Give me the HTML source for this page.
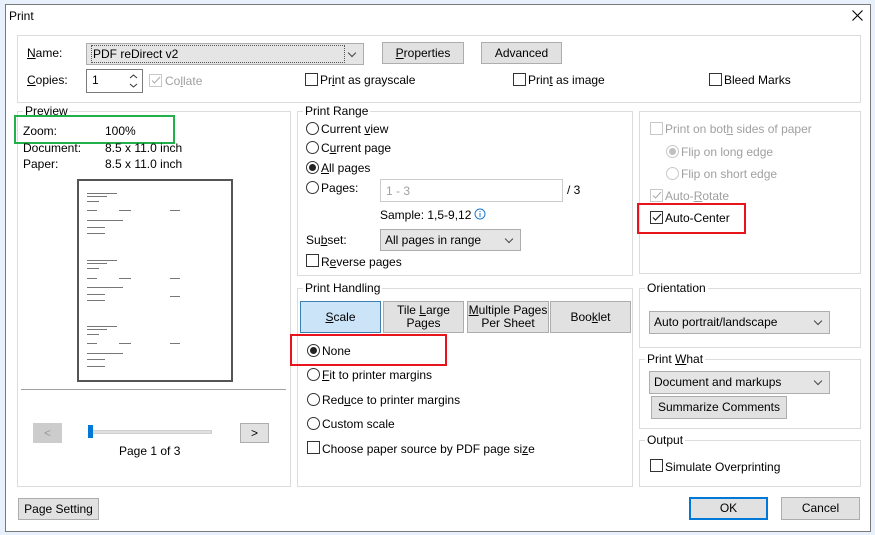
<!DOCTYPE html>
<html><head><meta charset="utf-8">
<style>
*{box-sizing:border-box;margin:0;padding:0}
body{width:875px;height:535px;background:#e8f1fb;position:relative;overflow:hidden;font-family:"Liberation Sans",sans-serif;font-size:12px;color:#000}
.a{position:absolute;white-space:nowrap}
.dlg{position:absolute;left:5px;top:4px;width:866px;height:528px;background:#fff;border:1px solid #7a7a7a}
.grp{position:absolute;border:1px solid #dcdcdc}
.lg{position:absolute;background:#fff;padding:0 2px;line-height:14px;color:#000}
.btn{position:absolute;background:#e1e1e1;border:1px solid #adadad;text-align:center;display:flex;align-items:center;justify-content:center;line-height:13px}
.cb{position:absolute;width:13px;height:13px;border:1px solid #333;background:#fff}
.rb{position:absolute;width:13px;height:13px;border:1px solid #333;border-radius:50%;background:#fff}
.rb.on::after{content:"";position:absolute;left:2px;top:2px;width:7px;height:7px;border-radius:50%;background:#222}
.t{position:absolute;white-space:nowrap;line-height:14px}
.g{color:#a0a0a0}
.gb{border-color:#c8c8c8!important}
.combo{position:absolute;background:#e5e5e5;border:1px solid #adadad;padding-left:4px;line-height:20px}
.combo::after{content:"";position:absolute;right:8px;top:6px;width:5px;height:5px;border-right:1px solid #444;border-bottom:1px solid #444;transform:rotate(45deg)}
u{text-decoration:underline}
.pl{position:absolute;height:1px;background:#777}
</style></head><body>
<div class="dlg"></div>
<div class="t" style="left:9px;top:9px">Print</div>
<svg class="a" style="left:852px;top:10px" width="11" height="11"><path d="M0.5 0.5L10.5 10.5M10.5 0.5L0.5 10.5" stroke="#000" stroke-width="1.1"/></svg>

<div class="grp" style="left:17px;top:35px;width:844px;height:68px"></div>
<div class="t" style="left:27px;top:46px"><u>N</u>ame:</div>
<div class="combo" style="left:86px;top:43px;width:278px;height:22px"><span style="border:1px dotted #555;display:inline-block;width:254px;line-height:16px;margin-top:1px;padding-left:1px">PDF reDirect v2</span></div>
<div class="btn" style="left:382px;top:42px;width:82px;height:22px"><span><u>P</u>roperties</span></div>
<div class="btn" style="left:481px;top:42px;width:81px;height:22px">Advanced</div>
<div class="t" style="left:27px;top:73px"><u>C</u>opies:</div>
<div class="a" style="left:86px;top:69px;width:57px;height:24px;border:1px solid #7a7a7a;background:#fff"><span class="t" style="left:5px;top:3px">1</span>
<svg class="a" style="left:42px;top:3px" width="9" height="16"><path d="M1 5L4.5 2L8 5M1 11L4.5 14L8 11" stroke="#333" fill="none"/></svg></div>
<div class="cb gb" style="left:149px;top:74px"></div>
<svg class="a" style="left:151px;top:76px" width="10" height="9"><path d="M1 4.5L3.5 7L9 1" stroke="#aaa" fill="none"/></svg>
<div class="t g" style="left:165px;top:74px">Co<u>l</u>late</div>
<div class="cb" style="left:305px;top:73px"></div><div class="t" style="left:320px;top:73px">Pr<u>i</u>nt as grayscale</div>
<div class="cb" style="left:513px;top:73px"></div><div class="t" style="left:528px;top:73px">Prin<u>t</u> as image</div>
<div class="cb" style="left:709px;top:73px"></div><div class="t" style="left:724px;top:73px">Bleed Marks</div>

<div class="grp" style="left:17px;top:111px;width:274px;height:376px"></div>
<div class="lg" style="left:23px;top:104px">Preview</div>
<div class="a" style="left:14px;top:115px;width:161px;height:29px;border:2px solid #22b04b"></div>
<div class="t" style="left:23px;top:124px">Zoom:</div><div class="t" style="left:105px;top:124px">100%</div>
<div class="t" style="left:23px;top:141px">Document:</div><div class="t" style="left:105px;top:141px">8.5 x 11.0 inch</div>
<div class="t" style="left:23px;top:157px">Paper:</div><div class="t" style="left:105px;top:157px">8.5 x 11.0 inch</div>
<div class="a" style="left:77px;top:179px;width:156px;height:203px;border:2px solid #555;background:#fff"></div>
<div class="pl" style="left:87px;top:193px;width:30px"></div><div class="pl" style="left:87px;top:196px;width:20px"></div>
<div class="pl" style="left:87px;top:201px;width:12px"></div><div class="pl" style="left:87px;top:210px;width:10px"></div><div class="pl" style="left:119px;top:210px;width:12px"></div><div class="pl" style="left:170px;top:210px;width:10px"></div>
<div class="pl" style="left:87px;top:220px;width:36px"></div><div class="pl" style="left:87px;top:227px;width:18px"></div><div class="pl" style="left:87px;top:233px;width:18px"></div>
<div class="pl" style="left:87px;top:260px;width:30px"></div><div class="pl" style="left:87px;top:263px;width:20px"></div>
<div class="pl" style="left:87px;top:268px;width:12px"></div><div class="pl" style="left:87px;top:278px;width:10px"></div><div class="pl" style="left:119px;top:278px;width:12px"></div><div class="pl" style="left:170px;top:278px;width:10px"></div>
<div class="pl" style="left:87px;top:287px;width:36px"></div><div class="pl" style="left:87px;top:294px;width:18px"></div><div class="pl" style="left:170px;top:296px;width:10px"></div><div class="pl" style="left:87px;top:300px;width:18px"></div>
<div class="pl" style="left:87px;top:326px;width:30px"></div><div class="pl" style="left:87px;top:329px;width:20px"></div>
<div class="pl" style="left:87px;top:334px;width:12px"></div><div class="pl" style="left:87px;top:343px;width:10px"></div><div class="pl" style="left:119px;top:343px;width:12px"></div><div class="pl" style="left:170px;top:343px;width:10px"></div>
<div class="pl" style="left:87px;top:353px;width:36px"></div><div class="pl" style="left:87px;top:359px;width:18px"></div><div class="pl" style="left:87px;top:366px;width:18px"></div>
<div class="a" style="left:21px;top:389px;width:265px;height:1px;background:#a0a0a0"></div>
<div class="btn" style="left:33px;top:423px;width:29px;height:20px;background:#ccc;border-color:#ccc;color:#999">&lt;</div>
<div class="a" style="left:88px;top:430px;width:124px;height:4px;background:#e0e0e0;border:1px solid #d0d0d0"></div>
<div class="a" style="left:88px;top:425px;width:5px;height:13px;background:#0078d7"></div>
<div class="btn" style="left:240px;top:423px;width:29px;height:20px">&gt;</div>
<div class="t" style="left:119px;top:444px">Page 1 of 3</div>
<div class="btn" style="left:18px;top:498px;width:81px;height:22px">Page Setting</div>

<div class="grp" style="left:297px;top:111px;width:336px;height:165px"></div>
<div class="lg" style="left:303px;top:104px">Print Range</div>
<div class="rb" style="left:306px;top:122px"></div><div class="t" style="left:321px;top:122px">Current <u>v</u>iew</div>
<div class="rb" style="left:306px;top:141px"></div><div class="t" style="left:321px;top:141px">C<u>u</u>rrent page</div>
<div class="rb on" style="left:306px;top:161px"></div><div class="t" style="left:321px;top:161px"><u>A</u>ll pages</div>
<div class="rb" style="left:306px;top:181px"></div><div class="t" style="left:321px;top:181px">Pa<u>g</u>es:</div>
<div class="a" style="left:380px;top:179px;width:183px;height:23px;border:1px solid #ccc;background:#fff"><span class="t g" style="left:5px;top:4px">1 - 3</span></div>
<div class="t" style="left:567px;top:183px">/ 3</div>
<div class="t" style="left:380px;top:208px">Sample: 1,5-9,12</div>
<svg class="a" style="left:474px;top:208px" width="12" height="12"><circle cx="6" cy="6" r="5" stroke="#1a7ad4" fill="none"/><path d="M6 5V9M6 3V4" stroke="#1a7ad4"/></svg>
<div class="t" style="left:306px;top:233px">Su<u>b</u>set:</div>
<div class="combo" style="left:380px;top:229px;width:141px;height:22px">All pages in range</div>
<div class="cb" style="left:306px;top:254px"></div><div class="t" style="left:321px;top:255px">R<u>e</u>verse pages</div>

<div class="grp" style="left:297px;top:288px;width:336px;height:199px"></div>
<div class="lg" style="left:303px;top:281px">Print Handling</div>
<div class="btn" style="left:300px;top:301px;width:81px;height:32px;background:#cce4f7;border-color:#3c7fb1"><span><u>S</u>cale</span></div>
<div class="btn" style="left:383px;top:301px;width:81px;height:32px"><span>Tile <u>L</u>arge<br>Pages</span></div>
<div class="btn" style="left:467px;top:301px;width:82px;height:32px"><span><u>M</u>ultiple Pages<br>Per Sheet</span></div>
<div class="btn" style="left:550px;top:301px;width:81px;height:32px"><span>Boo<u>k</u>let</span></div>
<div class="a" style="left:290px;top:334px;width:157px;height:32px;border:2px solid #e8131b"></div>
<div class="rb on" style="left:307px;top:344px"></div><div class="t" style="left:322px;top:344px">None</div>
<div class="rb" style="left:307px;top:368px"></div><div class="t" style="left:322px;top:368px"><u>F</u>it to printer margins</div>
<div class="rb" style="left:307px;top:393px"></div><div class="t" style="left:322px;top:393px">Red<u>u</u>ce to printer margins</div>
<div class="rb" style="left:307px;top:417px"></div><div class="t" style="left:322px;top:417px">Custom scale</div>
<div class="cb" style="left:307px;top:441px"></div><div class="t" style="left:322px;top:442px">Choose paper source by PDF page si<u>z</u>e</div>

<div class="grp" style="left:639px;top:111px;width:222px;height:163px"></div>
<div class="cb gb" style="left:650px;top:122px"></div><div class="t g" style="left:665px;top:122px">Print on bot<u>h</u> sides of paper</div>
<div class="rb gb" style="left:666px;top:145px"><div style="position:absolute;left:2px;top:2px;width:7px;height:7px;border-radius:50%;background:#c0c0c0"></div></div><div class="t g" style="left:681px;top:145px">Flip on long edge</div>
<div class="rb gb" style="left:666px;top:167px"></div><div class="t g" style="left:681px;top:167px">Flip on short edge</div>
<div class="cb gb" style="left:650px;top:189px"></div>
<svg class="a" style="left:652px;top:191px" width="10" height="9"><path d="M1 4.5L3.5 7L9 1" stroke="#aaa" fill="none"/></svg>
<div class="t g" style="left:665px;top:189px">Auto-<u>R</u>otate</div>
<div class="a" style="left:637px;top:203px;width:109px;height:31px;border:2px solid #e8131b"></div>
<div class="cb" style="left:650px;top:211px"></div>
<svg class="a" style="left:652px;top:213px" width="10" height="9"><path d="M1 4.5L3.5 7L9 1" stroke="#222" fill="none" stroke-width="1.2"/></svg>
<div class="t" style="left:665px;top:211px">Auto-Center</div>

<div class="grp" style="left:639px;top:288px;width:222px;height:60px"></div>
<div class="lg" style="left:645px;top:281px">Orientation</div>
<div class="combo" style="left:649px;top:311px;width:181px;height:23px">Auto portrait/landscape</div>

<div class="grp" style="left:639px;top:359px;width:222px;height:70px"></div>
<div class="lg" style="left:645px;top:352px">Print <u>W</u>hat</div>
<div class="combo" style="left:649px;top:371px;width:181px;height:23px">Document and markups</div>
<div class="btn" style="left:651px;top:396px;width:136px;height:23px">Summarize Comments</div>

<div class="grp" style="left:639px;top:440px;width:222px;height:47px"></div>
<div class="lg" style="left:645px;top:433px">Output</div>
<div class="cb" style="left:650px;top:459px"></div><div class="t" style="left:665px;top:460px">Simulate Overprinting</div>

<div class="btn" style="left:689px;top:497px;width:79px;height:23px;border:2px solid #0078d7">OK</div>
<div class="btn" style="left:781px;top:497px;width:79px;height:23px">Cancel</div>
</body></html>
